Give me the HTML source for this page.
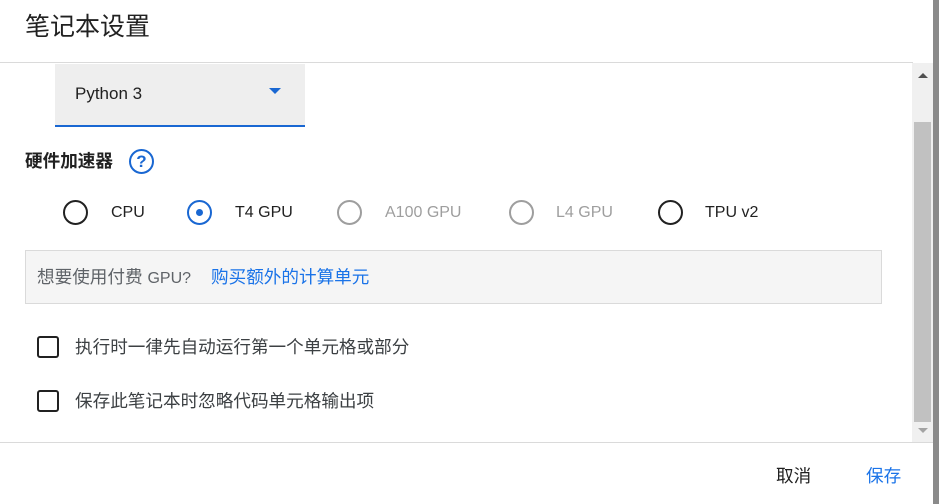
<!DOCTYPE html>
<html><head><meta charset="utf-8"><style>
*{margin:0;padding:0;box-sizing:border-box}
body{width:939px;height:504px;overflow:hidden;background:#fff;font-family:"Liberation Sans","Noto Sans CJK SC",sans-serif;color:#212121;position:relative}
.a{position:absolute}
.t{font-size:16px;white-space:nowrap;line-height:20px}
.c{font-size:17.6px;line-height:20px;white-space:nowrap}
.rad{position:absolute;width:25px;height:25px;border:2px solid #212121;border-radius:50%}
.cb{position:absolute;width:22px;height:22px;border:2px solid #212121;border-radius:3px}
</style></head><body>
<div class="a" style="left:933px;top:0;width:6px;height:504px;background:#8a8a8a"></div>
<div class="a" style="left:25px;top:10px;font-size:25px;line-height:34px;color:#212121">笔记本设置</div>
<div class="a" style="left:0;top:62px;width:913px;height:1px;background:#dadada"></div>
<div class="a" style="left:55px;top:64px;width:250px;height:61px;background:#eeeeee"></div>
<div class="a" style="left:55px;top:125px;width:250px;height:2px;background:#1967d2"></div>
<div class="a t" style="left:75px;top:84px;font-size:17px">Python 3</div>
<div class="a" style="left:269px;top:88px;width:0;height:0;border-left:6px solid transparent;border-right:6px solid transparent;border-top:6px solid #1967d2"></div>
<div class="a c" style="left:25px;top:151px;font-weight:bold">硬件加速器</div>
<div class="a" style="left:129px;top:149px;width:25px;height:25px;border:2px solid #1967d2;border-radius:50%;color:#1967d2;font-size:17px;font-weight:bold;text-align:center;line-height:21px">?</div>
<div class="rad" style="left:63px;top:200px"></div><div class="a t" style="left:111px;top:203px">CPU</div>
<div class="rad" style="left:187px;top:200px;border-color:#1967d2"></div><div class="a" style="left:196px;top:209px;width:7px;height:7px;border-radius:50%;background:#1967d2"></div><div class="a t" style="left:235px;top:203px">T4 GPU</div>
<div class="rad" style="left:337px;top:200px;border-color:#9e9e9e"></div><div class="a t" style="left:385px;top:203px;color:#9e9e9e">A100 GPU</div>
<div class="rad" style="left:509px;top:200px;border-color:#9e9e9e"></div><div class="a t" style="left:556px;top:203px;color:#9e9e9e">L4 GPU</div>
<div class="rad" style="left:658px;top:200px"></div><div class="a t" style="left:705px;top:203px">TPU v2</div>
<div class="a" style="left:25px;top:250px;width:857px;height:54px;background:#f5f5f5;border:1px solid #dadada"></div>
<div class="a c" style="left:37px;top:267px;color:#5f6368">想要使用付费 <span style="font-size:16px">GPU?</span></div>
<div class="a c" style="left:211px;top:267px;color:#1a73e8">购买额外的计算单元</div>
<div class="cb" style="left:37px;top:336px"></div><div class="a c" style="left:75px;top:337px;color:#3c4043">执行时一律先自动运行第一个单元格或部分</div>
<div class="cb" style="left:37px;top:390px"></div><div class="a c" style="left:75px;top:391px;color:#3c4043">保存此笔记本时忽略代码单元格输出项</div>
<div class="a" style="left:912px;top:63px;width:21px;height:379px;background:#f0f0f0"></div>
<div class="a" style="left:914px;top:122px;width:17px;height:300px;background:#c1c1c1"></div>
<div class="a" style="left:918px;top:73px;border-left:5px solid transparent;border-right:5px solid transparent;border-bottom:5px solid #505050"></div>
<div class="a" style="left:918px;top:428px;border-left:5px solid transparent;border-right:5px solid transparent;border-top:5px solid #a3a3a3"></div>
<div class="a" style="left:0;top:442px;width:933px;height:1px;background:#dadada"></div>
<div class="a c" style="left:776px;top:466px">取消</div>
<div class="a c" style="left:866px;top:466px;color:#1a73e8">保存</div>
</body></html>
